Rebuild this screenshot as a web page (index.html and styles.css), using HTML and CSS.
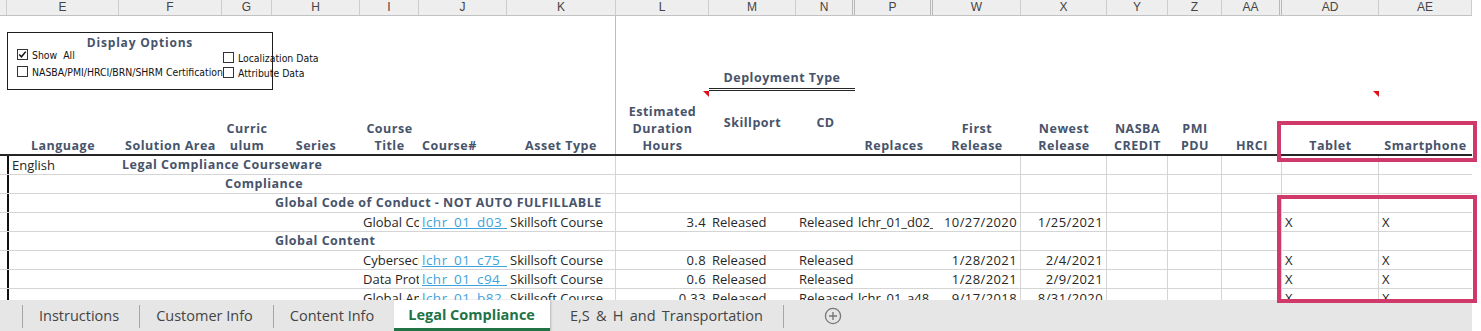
FILE: index.html
```html
<!DOCTYPE html>
<html lang="en">
<head>
  <meta charset="UTF-8" />
  <title>Legal Compliance</title>
  <link rel="stylesheet" href="styles.css">
</head>
<body>
<div class="page">
  <div class="sheet">
    <div class="cols letters">
      <div></div><div>E</div><div>F</div><div>G</div><div>H</div><div>I</div><div>J</div><div>K</div>
      <div>L</div><div>M</div><div class="hid">N</div><div class="hid">P</div><div>W</div><div>X</div>
      <div>Y</div><div>Z</div><div class="hid">AA</div><div>AD</div><div>AE</div>
    </div>

    <div class="cols band-top">
      <div></div><div></div><div></div><div></div><div></div><div></div><div></div><div class="gl"></div>
    </div>
    <div class="cols band-dep">
      <div></div><div></div><div></div><div></div><div></div><div></div><div></div><div class="gl"></div>
      <div></div>
      <div class="dep">Deployment Type</div>
    </div>
    <div class="cols band-labels">
      <div></div>
      <div class="hd">Language</div>
      <div class="hd">Solution Area</div>
      <div class="hd">Curric<br>ulum</div>
      <div class="hd">Series</div>
      <div class="hd">Course<br>Title</div>
      <div class="hd left">Course#</div>
      <div class="hd gl">Asset Type</div>
      <div class="hd note">Estimated<br>Duration<br>Hours</div>
      <div class="hd mid">Skillport</div>
      <div class="hd mid">CD</div>
      <div class="hd">Replaces</div>
      <div class="hd">First<br>Release</div>
      <div class="hd">Newest<br>Release</div>
      <div class="hd">NASBA<br>CREDIT</div>
      <div class="hd">PMI<br>PDU</div>
      <div class="hd">HRCI</div>
      <div class="hd note">Tablet</div>
      <div class="hd">Smartphone</div>
    </div>

    <div class="options">
      <div class="opt-title">Display Options</div>
      <div class="opt-cols">
        <div class="opt-col">
          <div class="opt"><span class="cb"><svg viewBox="0 0 11 11" width="9" height="9"><path d="M1.5 5.5 L4.2 8.3 L9.5 2" fill="none" stroke="#111" stroke-width="1.8"/></svg></span>Show&nbsp; All</div>
          <div class="opt"><span class="cb"></span>NASBA/PMI/HRCI/BRN/SHRM Certification</div>
        </div>
        <div class="opt-col r">
          <div class="opt"><span class="cb"></span>Localization Data</div>
          <div class="opt"><span class="cb"></span>Attribute Data</div>
        </div>
      </div>
    </div>

    <div class="rows">
      <div class="cols row">
        <div></div><div class="e">English</div><div class="lbl">Legal Compliance Courseware</div><div></div><div></div><div></div><div></div><div class="v"></div>
        <div></div><div></div><div></div><div></div><div class="v"></div><div class="v"></div><div class="v"></div><div class="v"></div><div class="v"></div><div class="v"></div><div></div>
      </div>
      <div class="cols row">
        <div></div><div class="e"></div><div></div><div class="lbl">Compliance</div><div></div><div></div><div></div><div class="v"></div>
        <div></div><div></div><div></div><div></div><div class="v"></div><div class="v"></div><div class="v"></div><div class="v"></div><div class="v"></div><div class="v"></div><div></div>
      </div>
      <div class="cols row">
        <div></div><div class="e"></div><div></div><div></div><div class="lbl">Global Code of Conduct - NOT AUTO FULFILLABLE</div><div></div><div></div><div class="v"></div>
        <div></div><div></div><div></div><div></div><div class="v"></div><div class="v"></div><div class="v"></div><div class="v"></div><div class="v"></div><div class="v"></div><div></div>
      </div>
      <div class="cols row">
        <div></div><div class="e"></div><div></div><div></div><div></div><div class="clip">Global Code</div><div class="clip"><a>lchr_01_d03_a</a></div><div class="v">Skillsoft Course</div>
        <div class="num">3.4</div><div>Released</div><div>Released</div><div class="clip">lchr_01_d02_a</div><div class="v num">10/27/2020</div><div class="v num">1/25/2021</div><div class="v"></div><div class="v"></div><div class="v"></div><div class="v">X</div><div>X</div>
      </div>
      <div class="cols row">
        <div></div><div class="e"></div><div></div><div></div><div class="lbl">Global Content</div><div></div><div></div><div class="v"></div>
        <div></div><div></div><div></div><div></div><div class="v"></div><div class="v"></div><div class="v"></div><div class="v"></div><div class="v"></div><div class="v"></div><div></div>
      </div>
      <div class="cols row">
        <div></div><div class="e"></div><div></div><div></div><div></div><div class="clip">Cybersecurity</div><div class="clip"><a>lchr_01_c75_l</a></div><div class="v">Skillsoft Course</div>
        <div class="num">0.8</div><div>Released</div><div>Released</div><div></div><div class="v num">1/28/2021</div><div class="v num">2/4/2021</div><div class="v"></div><div class="v"></div><div class="v"></div><div class="v">X</div><div>X</div>
      </div>
      <div class="cols row">
        <div></div><div class="e"></div><div></div><div></div><div></div><div class="clip">Data Protection</div><div class="clip"><a>lchr_01_c94_a</a></div><div class="v">Skillsoft Course</div>
        <div class="num">0.6</div><div>Released</div><div>Released</div><div></div><div class="v num">1/28/2021</div><div class="v num">2/9/2021</div><div class="v"></div><div class="v"></div><div class="v"></div><div class="v">X</div><div>X</div>
      </div>
      <div class="cols row">
        <div></div><div class="e"></div><div></div><div></div><div></div><div class="clip">Global Anti</div><div class="clip"><a>lchr_01_b82_a</a></div><div class="v">Skillsoft Course</div>
        <div class="num">0.33</div><div>Released</div><div>Released</div><div class="clip">lchr_01_a48_a</div><div class="v num">9/17/2018</div><div class="v num">8/31/2020</div><div class="v"></div><div class="v"></div><div class="v"></div><div class="v">X</div><div>X</div>
      </div>
    </div>
  </div>

  <div class="tabs">
    <span class="tab-sep"></span>
    <div class="tab">Instructions</div>
    <span class="tab-sep"></span>
    <div class="tab">Customer Info</div>
    <span class="tab-sep"></span>
    <div class="tab">Content Info</div>
    <div class="tab active">Legal Compliance</div>
    <div class="tab wide">E,S &amp; H and Transportation</div>
    <span class="tab-sep"></span>
    <div class="tab-add">
      <svg viewBox="0 0 18 18" width="18" height="18"><circle cx="9" cy="9" r="7.6" fill="none" stroke="#777" stroke-width="1.3"/><path d="M9 5 V13 M5 9 H13" stroke="#777" stroke-width="1.4"/></svg>
    </div>
  </div>

  <div class="mark mark-head"></div>
  <div class="mark mark-body"></div>
</div>
</body>
</html>
```

FILE: styles.css
```css
* {
  box-sizing: border-box;
}

body {
  margin: 0;
  background: #fff;
  font-family: 'Open Sans', 'Liberation Sans', sans-serif;
  color: #262626;
}

.page {
  position: relative;
  width: 1472px;
}

.sheet {
  position: relative;
  height: 300px;
  overflow: hidden;
}

/* D(sliver) E F G H I J K L M N P W X Y Z AA AD AE */
.cols {
  display: grid;
  grid-template-columns: 7px 112px 103px 50px 88px 59px 88px 109px 93px 87px 59px 78px 88px 86px 61px 54px 60px 97px 93px;
}

.letters {
  height: 16px;
  background: #eeeeee;
  border-bottom: 1px solid #c2c2c2;
  font: 12px/15px 'Liberation Sans', Arial, sans-serif;
  color: #444;
  text-align: center;
}
.letters div {
  border-right: 1px solid #cdcdcd;
}
.letters .hid {
  border-right: 3px double #b8b8b8;
}

.band-top {
  height: 52px;
}
.band-dep {
  height: 23px;
}
.band-labels {
  height: 65px;
  border-bottom: 2px solid #262626;
}
.gl {
  border-right: 1px solid #bdbdbd;
}

.dep,
.hd,
.lbl,
.opt-title {
  font-weight: 700;
  color: #47546b;
  letter-spacing: 0.5px;
}

.dep {
  grid-column: span 2;
  border-bottom: 3px double #262626;
  font-size: 12.5px;
  line-height: 20px;
  text-align: center;
}

.hd {
  display: flex;
  flex-direction: column;
  justify-content: flex-end;
  align-items: center;
  text-align: center;
  font-size: 12.5px;
  line-height: 17px;
  white-space: nowrap;
}
.hd.mid {
  justify-content: center;
}
.hd.left {
  align-items: flex-start;
  padding-left: 3px;
}
.note {
  position: relative;
}
.note::after {
  content: "";
  position: absolute;
  top: 0;
  right: 0;
  border-top: 6px solid #e0101a;
  border-left: 6px solid transparent;
}

/* display options form control */
.options {
  position: absolute;
  left: 7px;
  top: 32px;
  width: 266px;
  height: 58px;
  border: 1.5px solid #1e1e1e;
  padding-top: 1px;
  font: 10.4px 'DejaVu Sans Condensed', 'Liberation Sans Narrow', sans-serif;
  color: #111;
}
.opt-title {
  margin-top: 2px;
  text-align: center;
  font-family: 'Open Sans', sans-serif;
  font-size: 12px;
  line-height: 14px;
  letter-spacing: 0.8px;
}
.opt-cols {
  display: flex;
  padding-left: 9px;
}
.opt-col {
  width: 211px;
  margin-top: -4px;
}
.opt-col.r {
  width: auto;
  margin-top: 0;
}
.opt {
  display: flex;
  align-items: center;
  height: 17px;
  white-space: nowrap;
}
.opt-col.r .opt {
  height: 15px;
}
.cb {
  display: flex;
  align-items: center;
  justify-content: center;
  flex: none;
  width: 11px;
  height: 11px;
  margin-right: 4px;
  border: 1px solid #333;
  background: #fff;
}

/* data rows */
.row {
  height: 19px;
  border-bottom: 1px solid #d5d5d5;
  font-size: 13px;
  line-height: 18px;
}
.row > div {
  padding: 0 3px;
  white-space: nowrap;
}
.row .e {
  border-left: 2px solid #111;
}
.row .v {
  border-right: 1px solid #d5d5d5;
}
.row .clip {
  overflow: hidden;
}
.row .num {
  text-align: right;
  letter-spacing: 0.4px;
}
.row .lbl {
  font-size: 12.5px;
}
.row a {
  color: #3ea3dc;
  text-decoration: underline;
  font-size: 13.5px;
  letter-spacing: 0.5px;
}

/* sheet tabs */
.tabs {
  display: flex;
  height: 31px;
  padding-left: 22px;
  background: #e6e6e6;
  font-size: 14.5px;
  color: #444;
}
.tab {
  display: flex;
  align-items: center;
  padding: 0 20px 0 16px;
  white-space: nowrap;
}
.tab.active {
  padding: 0 15px 0 14px;
  background: #fff;
  color: #217346;
  font-weight: 700;
  border-bottom: 3px solid #217346;
  box-shadow: 1px 0 2px rgba(0, 0, 0, 0.2);
}
.tab.wide {
  padding: 0 20px;
  word-spacing: 2.5px;
}
.tab-sep {
  width: 1px;
  margin: 5px 0 3px;
  background: #a6a6a6;
}
.tab-add {
  display: flex;
  align-items: center;
  margin-left: 40px;
}

/* highlight annotations */
.mark {
  position: absolute;
  left: 1277px;
  width: 200px;
  border: 4px solid #cf3a6b;
}
.mark-head {
  top: 121px;
  height: 41px;
}
.mark-body {
  top: 195px;
  height: 108px;
}
```
